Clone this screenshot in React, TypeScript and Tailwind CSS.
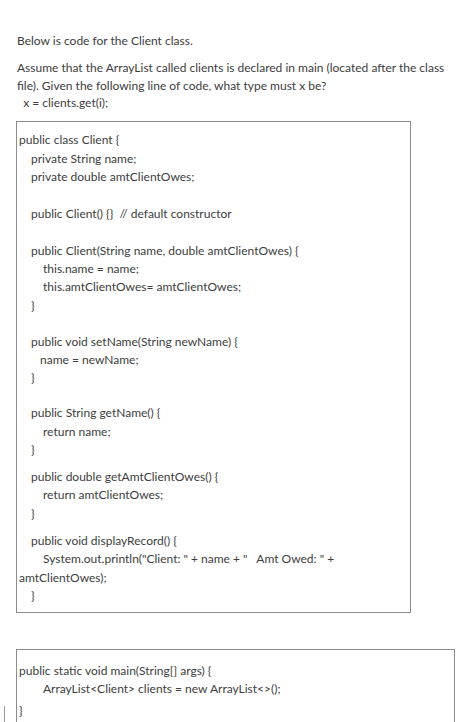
const font = { fontFamily: "Lato, 'Open Sans', sans-serif" };

type Line = { text: string; pl: string; mt: string };

const clientLines: Line[] = [
  { text: "public class Client {", pl: "pl-0", mt: "mt-0" },
  { text: "private String name;", pl: "pl-[12px]", mt: "mt-[1px]" },
  { text: "private double amtClientOwes;", pl: "pl-[12px]", mt: "mt-0" },
  { text: "public Client() {}  // default constructor", pl: "pl-[12px]", mt: "mt-[19px]" },
  { text: "public Client(String name, double amtClientOwes) {", pl: "pl-[12px]", mt: "mt-[19px]" },
  { text: "this.name = name;", pl: "pl-[24px]", mt: "mt-0" },
  { text: "this.amtClientOwes= amtClientOwes;", pl: "pl-[24px]", mt: "mt-0" },
  { text: "}", pl: "pl-[12px]", mt: "mt-px" },
  { text: "public void setName(String newName) {", pl: "pl-[12px]", mt: "mt-[18px]" },
  { text: "name = newName;", pl: "pl-[21px]", mt: "mt-0" },
  { text: "}", pl: "pl-[12px]", mt: "mt-0" },
  { text: "public String getName() {", pl: "pl-[12px]", mt: "mt-[17px]" },
  { text: "return name;", pl: "pl-[24px]", mt: "mt-px" },
  { text: "}", pl: "pl-[12px]", mt: "mt-0" },
  { text: "public double getAmtClientOwes() {", pl: "pl-[12px]", mt: "mt-[9px]" },
  { text: "return amtClientOwes;", pl: "pl-[24px]", mt: "mt-0" },
  { text: "}", pl: "pl-[12px]", mt: "mt-px" },
  { text: "public void displayRecord() {", pl: "pl-[12px]", mt: "mt-[9px]" },
  { text: 'System.out.println("Client: " + name + "   Amt Owed: " +', pl: "pl-[24px]", mt: "mt-0" },
  { text: "amtClientOwes);", pl: "pl-0", mt: "mt-px" },
  { text: "}", pl: "pl-[12px]", mt: "mt-0" },
];

function CodeLine({ line }: { line: Line }) {
  return (
    <div className={`${line.pl} ${line.mt} h-[18px] whitespace-pre leading-[18px]`}>
      {line.text}
    </div>
  );
}

export default function App() {
  return (
    <div
      className="relative min-h-[722px] overflow-hidden bg-white text-[12px] text-[#3d3d3d]"
      style={font}
    >
      <div className="pl-[17px] pt-[32px]">
        <p className="leading-[18px]">Below is code for the Client class.</p>
        <p className="mt-[9px] pr-[20px] leading-[17.5px]">
          Assume that the ArrayList called clients is declared in main (located after the class
          file). Given the following line of code, what type must x be?
        </p>
        <p className="whitespace-pre leading-[17.5px]">  x = clients.get(i);</p>
      </div>

      <div className="ml-[16px] mt-[9px] w-[395px] border border-[#8c8c8c] pb-[7px] pl-[2px] pt-[9px]">
        {clientLines.map((line, i) => (
          <CodeLine key={i} line={line} />
        ))}
      </div>

      <div className="ml-[16px] mt-[36px] h-[100px] w-[439px] border border-[#8c8c8c] pl-[2px] pt-[12px]">
        <div className="h-[18px] leading-[18px]">public static void main(String[] args) {"{"}</div>
        <div className="h-[18px] pl-[24px] leading-[18px]">
          ArrayList&lt;Client&gt; clients = new ArrayList&lt;&gt;();
        </div>
        <div className="mt-[4px] h-[18px] leading-[18px]">{"}"}</div>
      </div>

      <div className="absolute left-[4px] top-[706px] h-[16px] w-px bg-[#9a9a9a]" />
    </div>
  );
}
